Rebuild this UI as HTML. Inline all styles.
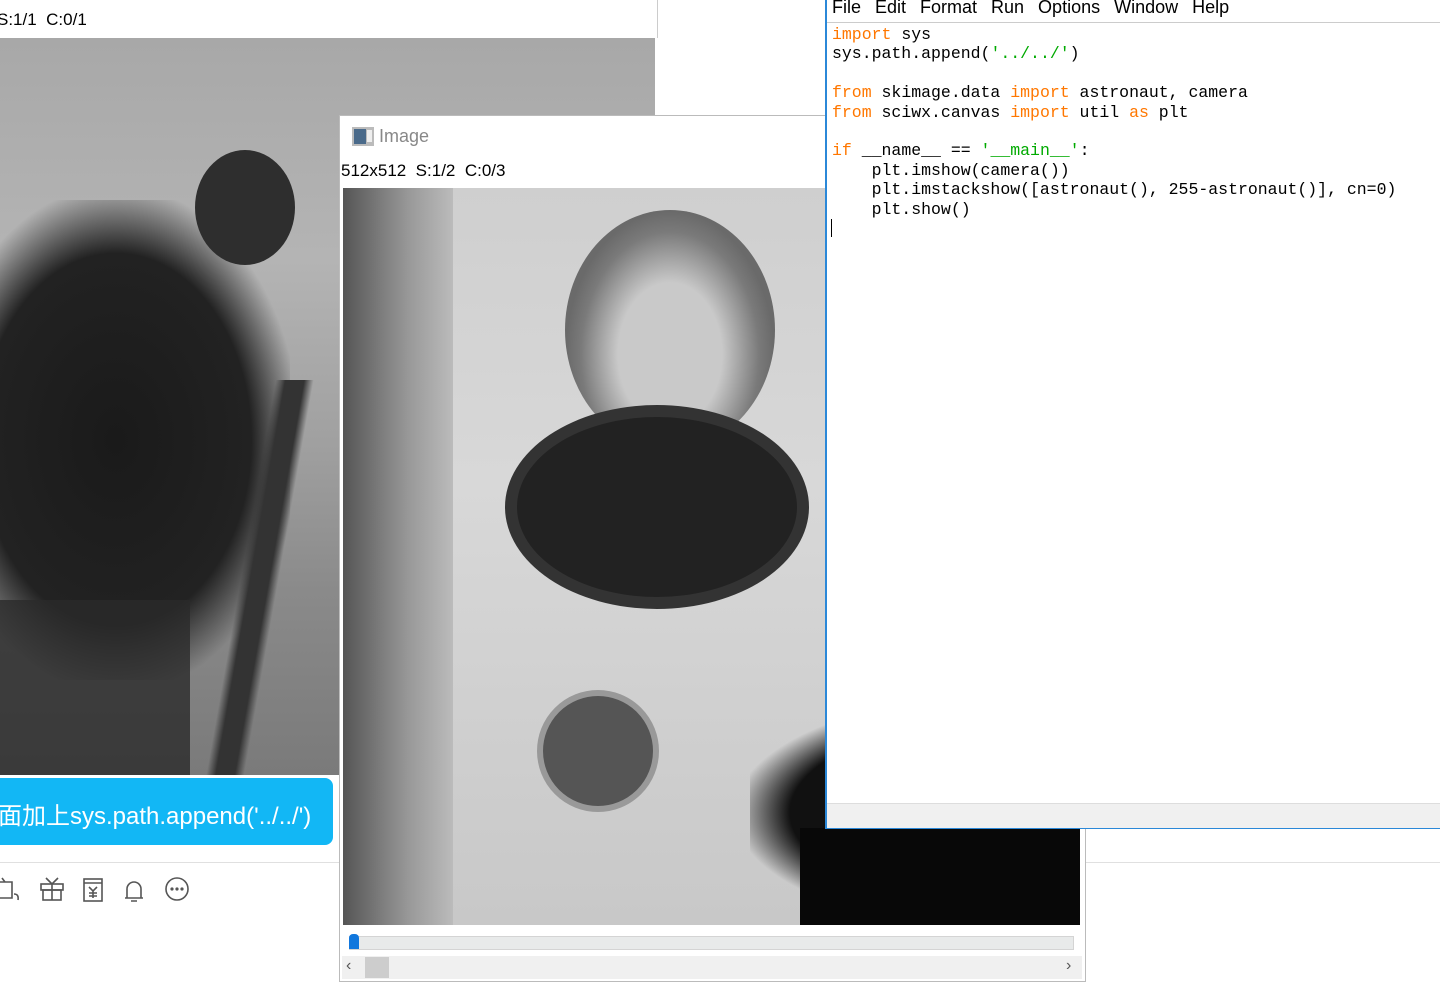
<!DOCTYPE html>
<html><head><meta charset="utf-8"><style>
body{margin:0;width:1440px;height:991px;position:relative;overflow:hidden;background:#fff;font-family:"Liberation Sans","Noto Sans CJK SC",sans-serif}
.a{position:absolute}
.code{font-family:"Liberation Mono",monospace;font-size:16.5px;line-height:19.4px;white-space:pre;color:#000}
.k{color:#ff7700}.s{color:#00aa00}
</style></head><body>
<div class="a" style="left:0;top:0;width:657px;height:38px;background:#fff;border-right:1px solid #ccc"></div>
<div class="a" style="left:-3px;top:10px;font-size:17px;color:#000">S:1/1&nbsp; C:0/1</div>
<div class="a" style="left:0;top:38px;width:655px;height:737px;background:linear-gradient(180deg,#a8a8a8 0%,#b4b4b4 30%,#a0a0a0 55%,#8a8a8a 75%,#7a7a7a 100%)"></div>
<div class="a" style="left:0;top:200px;width:290px;height:480px;background:radial-gradient(ellipse at 40% 50%,#1a1a1a 0%,#222 55%,rgba(40,40,40,0) 75%)"></div>
<div class="a" style="left:195px;top:150px;width:100px;height:115px;border-radius:50%;background:#2e2e2e"></div>
<div class="a" style="left:0;top:600px;width:190px;height:175px;background:#2a2a2a;opacity:.8"></div>
<div class="a" style="left:200px;top:380px;width:120px;height:395px;background:linear-gradient(100deg,transparent 40%,#333 45%,#333 55%,transparent 60%)"></div>
<div class="a" style="left:0;top:778px;width:333px;height:67px;background:#12b7f5;border-radius:0 8px 8px 0"></div>
<div class="a" style="left:-2px;top:796px;font-size:24px;color:#fff">面加上sys.path.append('../../')</div>
<div class="a" style="left:0;top:862px;width:340px;height:1px;background:#e0e0e0"></div>
<div class="a" style="left:1085px;top:862px;width:355px;height:1px;background:#e0e0e0"></div>
<svg class="a" style="left:0;top:872px" width="200" height="34" fill="none" stroke="#555" stroke-width="1.6">
<path d="M0 10h12v16H0M2 6l3 4M14 22q5 0 4 6"/>
<rect x="41" y="12" width="22" height="6"/><rect x="43" y="18" width="18" height="10"/><path d="M52 12v16M46 6l6 6 6-6"/>
<rect x="84" y="7" width="18" height="22"/><path d="M84 11h18M89 15l4 4 4-4M93 19v7M89 21h8M89 24h8"/>
<path d="M125 26h18M127 26v-9a7 7 0 0 1 14 0v9M131 29h6"/>
<circle cx="177" cy="17" r="11"/><circle cx="172" cy="17" r=".8" fill="#555"/><circle cx="177" cy="17" r=".8" fill="#555"/><circle cx="182" cy="17" r=".8" fill="#555"/>
</svg>
<div class="a" style="left:339px;top:115px;width:745px;height:865px;background:#fff;border:1px solid #bbb"></div>
<svg class="a" style="left:352px;top:127px" width="22" height="19"><rect x="0" y="0" width="22" height="19" fill="#bbb"/><rect x="2" y="2" width="12" height="15" fill="#4a6a8a"/><rect x="15" y="3" width="5" height="12" fill="#eee"/></svg>
<div class="a" style="left:379px;top:126px;font-size:18px;color:#888">Image</div>
<div class="a" style="left:341px;top:161px;font-size:17px;color:#000">512x512&nbsp; S:1/2&nbsp; C:0/3</div>
<div class="a" style="left:343px;top:188px;width:737px;height:737px;background:linear-gradient(180deg,#cfcfcf 0%,#d8d8d8 40%,#c8c8c8 100%)"></div>
<div class="a" style="left:343px;top:188px;width:110px;height:737px;background:linear-gradient(90deg,#555,#999 60%,#bbb)"></div>
<div class="a" style="left:565px;top:210px;width:210px;height:240px;border-radius:50%;background:radial-gradient(ellipse at 50% 60%,#c9c9c9 35%,#7a7a7a 60%,#6a6a6a 70%)"></div>
<div class="a" style="left:505px;top:405px;width:280px;height:180px;border-radius:50%;border:12px solid #333;background:#222"></div>
<div class="a" style="left:750px;top:700px;width:330px;height:225px;background:radial-gradient(ellipse at 80% 50%,#111 60%,rgba(0,0,0,0) 75%)"></div>
<div class="a" style="left:800px;top:828px;width:280px;height:97px;background:#080808"></div>
<div class="a" style="left:537px;top:690px;width:110px;height:110px;border-radius:50%;background:#555;border:6px solid #999"></div>
<div class="a" style="left:349px;top:936px;width:723px;height:12px;background:#e8eaea;border:1px solid #d4d4d4"></div>
<div class="a" style="left:349px;top:934px;width:10px;height:15px;background:#1177dd;border-radius:4px 4px 0 0"></div>
<div class="a" style="left:342px;top:956px;width:740px;height:23px;background:#f0f0f0"></div>
<div class="a" style="left:365px;top:957px;width:24px;height:21px;background:#cdcdcd"></div>
<div class="a" style="left:346px;top:957px;font-size:16px;color:#555">‹</div>
<div class="a" style="left:1066px;top:957px;font-size:16px;color:#555">›</div>
<div class="a" style="left:825px;top:0;width:615px;height:827px;background:#fff;border-left:2px solid #2b88d8;border-bottom:2px solid #2b88d8"></div>
<div class="a" style="left:827px;top:22px;width:613px;height:1px;background:#ccc"></div>
<div class="a" style="left:832px;top:-3px;font-size:18px;color:#000;word-spacing:2px">File&nbsp; Edit&nbsp; Format&nbsp; Run&nbsp; Options&nbsp; Window&nbsp; Help</div>
<div class="a code" style="left:832px;top:25px"><span class="k">import</span> sys
sys.path.append(<span class="s">'../../'</span>)

<span class="k">from</span> skimage.data <span class="k">import</span> astronaut, camera
<span class="k">from</span> sciwx.canvas <span class="k">import</span> util <span class="k">as</span> plt

<span class="k">if</span> __name__ == <span class="s">'__main__'</span>:
    plt.imshow(camera())
    plt.imstackshow([astronaut(), 255-astronaut()], cn=0)
    plt.show()</div>
<div class="a" style="left:831px;top:219px;width:1px;height:18px;background:#000"></div>
<div class="a" style="left:827px;top:803px;width:613px;height:24px;background:#f0f0f0;border-top:1px solid #ddd"></div>
</body></html>
